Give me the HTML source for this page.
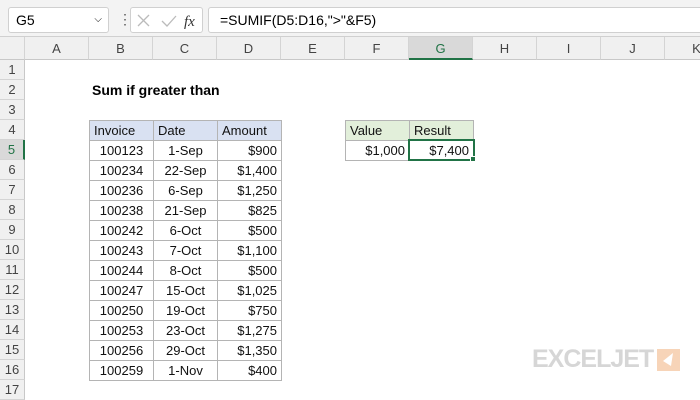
<!DOCTYPE html><html><head><style>
body{margin:0;width:700px;height:400px;overflow:hidden;background:#fff;font-family:"Liberation Sans",sans-serif;position:relative}
.a{position:absolute;box-sizing:border-box}
.ch{top:37px;height:23px;background:#f0f0f0;border-right:1px solid #d4d4d4;border-bottom:1px solid #c8c8c8;text-align:center;font-size:13px;line-height:23px;color:#444}
.rh{left:0;width:25px;height:20px;background:#f0f0f0;border-bottom:1px solid #d4d4d4;border-right:1px solid #c8c8c8;text-align:center;font-size:13px;line-height:20px;color:#444}
.c{height:21px;border:1px solid #b4b4b4;font-size:13px;line-height:19px;padding:0 4px;color:#111;white-space:nowrap}
</style></head><body>
<div class="a" style="left:0;top:0;width:700px;height:37px;background:#f3f3f3;border-bottom:1px solid #d0d0d0"></div>
<div class="a" style="left:8px;top:7px;width:101px;height:26px;background:#fff;border:1px solid #d0d0d0;border-radius:3px;font-size:14px;line-height:24px;padding-left:7px">G5<span style="position:absolute;right:6px;top:0;font-size:10px">&#9013;</span></div>
<div class="a" style="left:118px;top:12px;font-size:14px;color:#555;line-height:14px">&#8942;</div>
<div class="a" style="left:130px;top:7px;width:73px;height:26px;background:#fff;border:1px solid #d0d0d0;border-radius:3px"></div>
<svg class="a" style="left:134px;top:12px" width="70" height="18"><path d="M4 3l11 11M15 3L4 14" stroke="#bbb" stroke-width="1.3" fill="none"/><path d="M28 9l5 5 9-10" stroke="#bbb" stroke-width="1.3" fill="none"/><text x="50" y="14" font-family="Liberation Serif" font-style="italic" font-size="15" fill="#333">fx</text></svg>
<div class="a" style="left:208px;top:7px;width:500px;height:26px;background:#fff;border:1px solid #d0d0d0;border-radius:3px;font-size:14px;line-height:24px;padding-left:11px">=SUMIF(D5:D16,"&gt;"&amp;F5)</div>
<div class="a ch" style="left:0;width:25px"></div>
<div class="a ch" style="left:25px;width:64px">A</div><div class="a ch" style="left:89px;width:64px">B</div><div class="a ch" style="left:153px;width:64px">C</div><div class="a ch" style="left:217px;width:64px">D</div><div class="a ch" style="left:281px;width:64px">E</div><div class="a ch" style="left:345px;width:64px">F</div><div class="a ch" style="left:409px;width:64px;background:#d9d9d9;color:#217346;border-bottom:2px solid #217346">G</div><div class="a ch" style="left:473px;width:64px">H</div><div class="a ch" style="left:537px;width:64px">I</div><div class="a ch" style="left:601px;width:64px">J</div><div class="a ch" style="left:665px;width:64px">K</div>
<div class="a rh" style="top:60px">1</div><div class="a rh" style="top:80px">2</div><div class="a rh" style="top:100px">3</div><div class="a rh" style="top:120px">4</div><div class="a rh" style="top:140px;background:#d9d9d9;color:#217346;border-right:2px solid #217346">5</div><div class="a rh" style="top:160px">6</div><div class="a rh" style="top:180px">7</div><div class="a rh" style="top:200px">8</div><div class="a rh" style="top:220px">9</div><div class="a rh" style="top:240px">10</div><div class="a rh" style="top:260px">11</div><div class="a rh" style="top:280px">12</div><div class="a rh" style="top:300px">13</div><div class="a rh" style="top:320px">14</div><div class="a rh" style="top:340px">15</div><div class="a rh" style="top:360px">16</div><div class="a rh" style="top:380px">17</div>
<div class="a" style="left:92px;top:82px;font-size:14px;font-weight:bold">Sum if greater than</div>
<div id="t"></div>
<script>
var d=[["100123","1-Sep","$900"],["100234","22-Sep","$1,400"],["100236","6-Sep","$1,250"],["100238","21-Sep","$825"],["100242","6-Oct","$500"],["100243","7-Oct","$1,100"],["100244","8-Oct","$500"],["100247","15-Oct","$1,025"],["100250","19-Oct","$750"],["100253","23-Oct","$1,275"],["100256","29-Oct","$1,350"],["100259","1-Nov","$400"]];
var h='';function c(x,y,w,t,al,bg){h+='<div class="a c" style="left:'+x+'px;top:'+y+'px;width:'+(w+1)+'px;text-align:'+al+';'+(bg?'background:'+bg:'')+'">'+t+'</div>';}
c(89,120,64,'Invoice','left','#d9e1f2');c(153,120,64,'Date','left','#d9e1f2');c(217,120,64,'Amount','left','#d9e1f2');
d.forEach(function(r,i){var y=140+i*20;c(89,y,64,r[0],'center');c(153,y,64,r[1],'center');c(217,y,64,r[2],'right');});
c(345,120,64,'Value','left','#e2efda');c(409,120,64,'Result','left','#e2efda');c(345,140,64,'$1,000','right');c(409,140,64,'$7,400','right');
document.getElementById('t').innerHTML=h;
</script>
<div class="a" style="left:408px;top:139px;width:67px;height:22px;border:2px solid #217346"></div>
<div class="a" style="left:470px;top:156px;width:6px;height:6px;background:#217346;border:1px solid #fff"></div>
<div class="a" style="left:532px;top:345px;font-size:25px;font-weight:bold;color:#d6d6d6;letter-spacing:-1px;line-height:28px">EXCELJET</div>
<div class="a" style="left:657px;top:349px;width:23px;height:22px;background:#f7d4b8"><svg width="23" height="22"><path d="M16 4L6 12l8 5z" fill="#fff"/></svg></div>
</body></html>
